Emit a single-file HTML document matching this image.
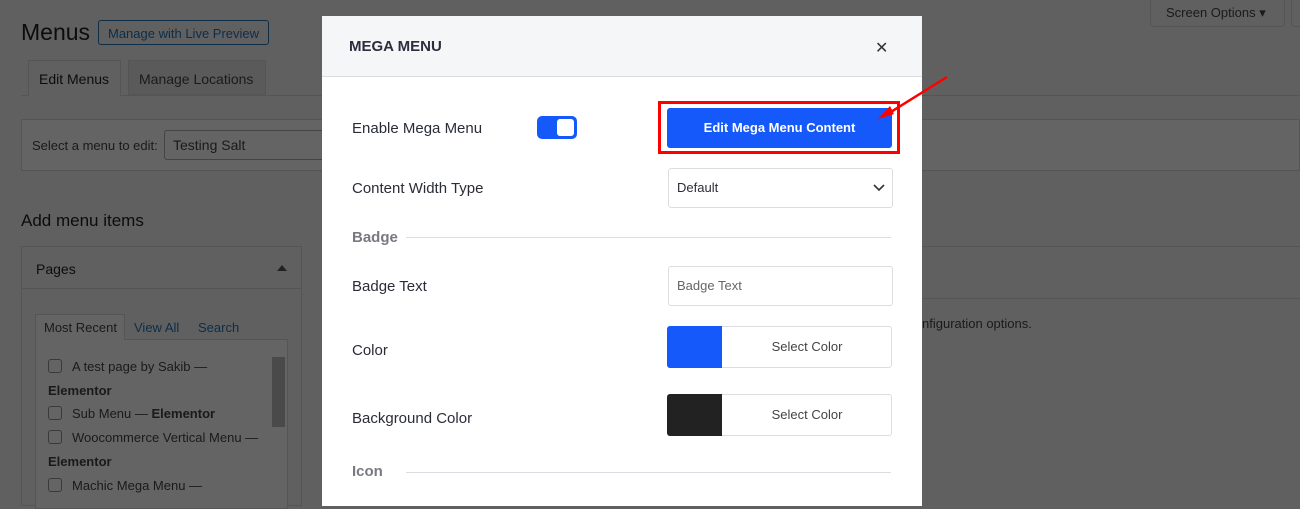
<!DOCTYPE html>
<html><head><meta charset="utf-8"><style>
*{box-sizing:border-box;margin:0;padding:0}
body{width:1300px;height:498px;overflow:hidden;background:#606060;font-family:"Liberation Sans",sans-serif;position:relative}
.a{position:absolute}
.t{color:#0c0c0c;font-size:13px;white-space:nowrap}
.cb{position:absolute;width:14px;height:14px;border:1px solid #3a3a3a;border-radius:3px;background:#646464}
.m{font-family:"Liberation Sans",sans-serif;color:#2c2e3e}
.lbl{position:absolute;left:352px;font-size:15px;color:#2a2c38;white-space:nowrap}
</style></head><body>
<!-- background WP -->
<div class="a" style="left:21px;top:19px;font-size:23px;color:#0c0c0c">Menus</div>
<div class="a" style="left:98px;top:20px;width:171px;height:25px;border:1px solid #0e2d47;border-radius:3px;font-size:13px;color:#0e2d47;padding:5px 0 0 9px;white-space:nowrap">Manage with Live Preview</div>
<div class="a" style="left:21px;top:95px;width:1279px;height:1px;background:#555"></div>
<div class="a" style="left:28px;top:60px;width:93px;height:36px;background:#606060;border:1px solid #555;border-bottom:none"></div>
<div class="a t" style="left:39px;top:71px;font-size:14px">Edit Menus</div>
<div class="a" style="left:128px;top:60px;width:138px;height:35px;background:#5a5a5a;border:1px solid #555"></div>
<div class="a t" style="left:139px;top:71px;font-size:14px;color:#1a1a1a">Manage Locations</div>
<div class="a" style="left:21px;top:119px;width:1279px;height:52px;background:#646464;border:1px solid #555"></div>
<div class="a t" style="left:32px;top:138px;font-size:13px;color:#1a1a1a">Select a menu to edit:</div>
<div class="a" style="left:164px;top:130px;width:170px;height:30px;border:1px solid #444;border-radius:3px;background:#646464"></div>
<div class="a t" style="left:173px;top:137px;font-size:14px;color:#1a1a1a">Testing Salt</div>
<div class="a" style="left:922px;top:246px;width:378px;height:1px;background:#555"></div>
<div class="a" style="left:922px;top:298px;width:378px;height:1px;background:#555"></div>
<div class="a t" style="left:922px;top:316px;font-size:13px;color:#1a1a1a">nfiguration options.</div>
<div class="a t" style="left:21px;top:211px;font-size:17px">Add menu items</div>
<div class="a" style="left:21px;top:246px;width:281px;height:260px;background:#606060;border:1px solid #555"></div>
<div class="a" style="left:22px;top:247px;width:279px;height:42px;border-bottom:1px solid #555"></div>
<div class="a t" style="left:36px;top:261px;font-size:14px">Pages</div>
<div class="a" style="left:277px;top:265px;width:0;height:0;border-left:5px solid transparent;border-right:5px solid transparent;border-bottom:6px solid #222"></div>
<div class="a" style="left:35px;top:339px;width:253px;height:170px;border:1px solid #555;background:#646464"></div>
<div class="a" style="left:35px;top:314px;width:90px;height:26px;border:1px solid #555;border-bottom:none;background:#646464"></div>
<div class="a t" style="left:44px;top:320px;font-size:13px;color:#1a1a1a">Most Recent</div>
<div class="a t" style="left:134px;top:320px;font-size:13px;color:#0e2d47">View All</div>
<div class="a t" style="left:198px;top:320px;font-size:13px;color:#0e2d47">Search</div>
<div class="a" style="left:272px;top:357px;width:13px;height:70px;background:#4a4a4a"></div>
<div class="cb" style="left:48px;top:359px"></div><div class="a t" style="left:72px;top:359px;color:#1a1a1a">A test page by Sakib —</div>
<div class="a t" style="left:48px;top:383px;color:#1a1a1a;font-weight:bold">Elementor</div>
<div class="cb" style="left:48px;top:406px"></div><div class="a t" style="left:72px;top:406px;color:#1a1a1a">Sub Menu — <b>Elementor</b></div>
<div class="cb" style="left:48px;top:430px"></div><div class="a t" style="left:72px;top:430px;color:#1a1a1a">Woocommerce Vertical Menu —</div>
<div class="a t" style="left:48px;top:454px;color:#1a1a1a;font-weight:bold">Elementor</div>
<div class="cb" style="left:48px;top:478px"></div><div class="a t" style="left:72px;top:478px;color:#1a1a1a">Machic Mega Menu —</div>
<div class="a" style="left:1150px;top:-1px;width:135px;height:28px;border:1px solid #555;border-radius:0 0 4px 4px"></div>
<div class="a t" style="left:1166px;top:5px;font-size:13px;color:#1a1a1a">Screen Options ▾</div>
<div class="a" style="left:1291px;top:-1px;width:20px;height:28px;border:1px solid #555;border-radius:0 0 4px 4px"></div>

<!-- modal -->
<div class="a" style="left:322px;top:16px;width:600px;height:490px;background:#fff"></div>
<div class="a" style="left:322px;top:16px;width:600px;height:61px;background:#f5f6f7;border-bottom:1px solid #dcdde0"></div>
<div class="a m" style="left:349px;top:38px;font-size:15px;font-weight:bold">MEGA MENU</div>
<div class="a" style="left:875px;top:38px;font-size:16px;color:#333">✕</div>
<div class="lbl" style="top:120px">Enable Mega Menu</div>
<div class="a" style="left:537px;top:116px;width:40px;height:23px;background:#1559fa;border-radius:5px"></div>
<div class="a" style="left:557px;top:119px;width:17px;height:17px;background:#fff;border-radius:3px"></div>
<div class="a" style="left:658px;top:101px;width:242px;height:53px;border:3px solid #f00"></div>
<div class="a" style="left:667px;top:108px;width:225px;height:40px;background:#1559fa;border-radius:3px;color:#fff;font-size:13px;font-weight:bold;text-align:center;line-height:40px">Edit Mega Menu Content</div>
<svg class="a" style="left:860px;top:70px" width="95" height="60"><line x1="87" y1="7" x2="26" y2="45" stroke="#f00" stroke-width="2.5"/><path d="M18 49 L30 36 L34 44 Z" fill="#f00"/></svg>
<div class="lbl" style="top:180px">Content Width Type</div>
<div class="a" style="left:668px;top:168px;width:225px;height:40px;border:1px solid #dcdde0;border-radius:3px"></div>
<div class="a" style="left:677px;top:180px;font-size:13px;color:#2a2c38">Default</div>
<svg class="a" style="left:872px;top:183px" width="14" height="10"><path d="M2 2 L7 7 L12 2" fill="none" stroke="#333" stroke-width="1.6"/></svg>
<div class="a" style="left:352px;top:229px;font-size:15px;font-weight:bold;color:#7a7880">Badge</div>
<div class="a" style="left:406px;top:237px;width:485px;height:1px;background:#dcdde3"></div>
<div class="lbl" style="top:278px">Badge Text</div>
<div class="a" style="left:668px;top:266px;width:225px;height:40px;border:1px solid #dcdde0;border-radius:3px"></div>
<div class="a" style="left:677px;top:278px;font-size:13px;color:#666">Badge Text</div>
<div class="lbl" style="top:342px">Color</div>
<div class="a" style="left:667px;top:326px;width:225px;height:42px;border:1px solid #dcdde0;border-radius:3px"></div>
<div class="a" style="left:667px;top:326px;width:55px;height:42px;background:#1559fa;border-radius:3px 0 0 3px"></div>
<div class="a" style="left:722px;top:339px;width:170px;text-align:center;font-size:13px;color:#444">Select Color</div>
<div class="lbl" style="top:410px">Background Color</div>
<div class="a" style="left:667px;top:394px;width:225px;height:42px;border:1px solid #dcdde0;border-radius:3px"></div>
<div class="a" style="left:667px;top:394px;width:55px;height:42px;background:#222;border-radius:3px 0 0 3px"></div>
<div class="a" style="left:722px;top:407px;width:170px;text-align:center;font-size:13px;color:#444">Select Color</div>
<div class="a" style="left:352px;top:463px;font-size:15px;font-weight:bold;color:#7a7880">Icon</div>
<div class="a" style="left:406px;top:472px;width:485px;height:1px;background:#dcdde3"></div>
</body></html>
